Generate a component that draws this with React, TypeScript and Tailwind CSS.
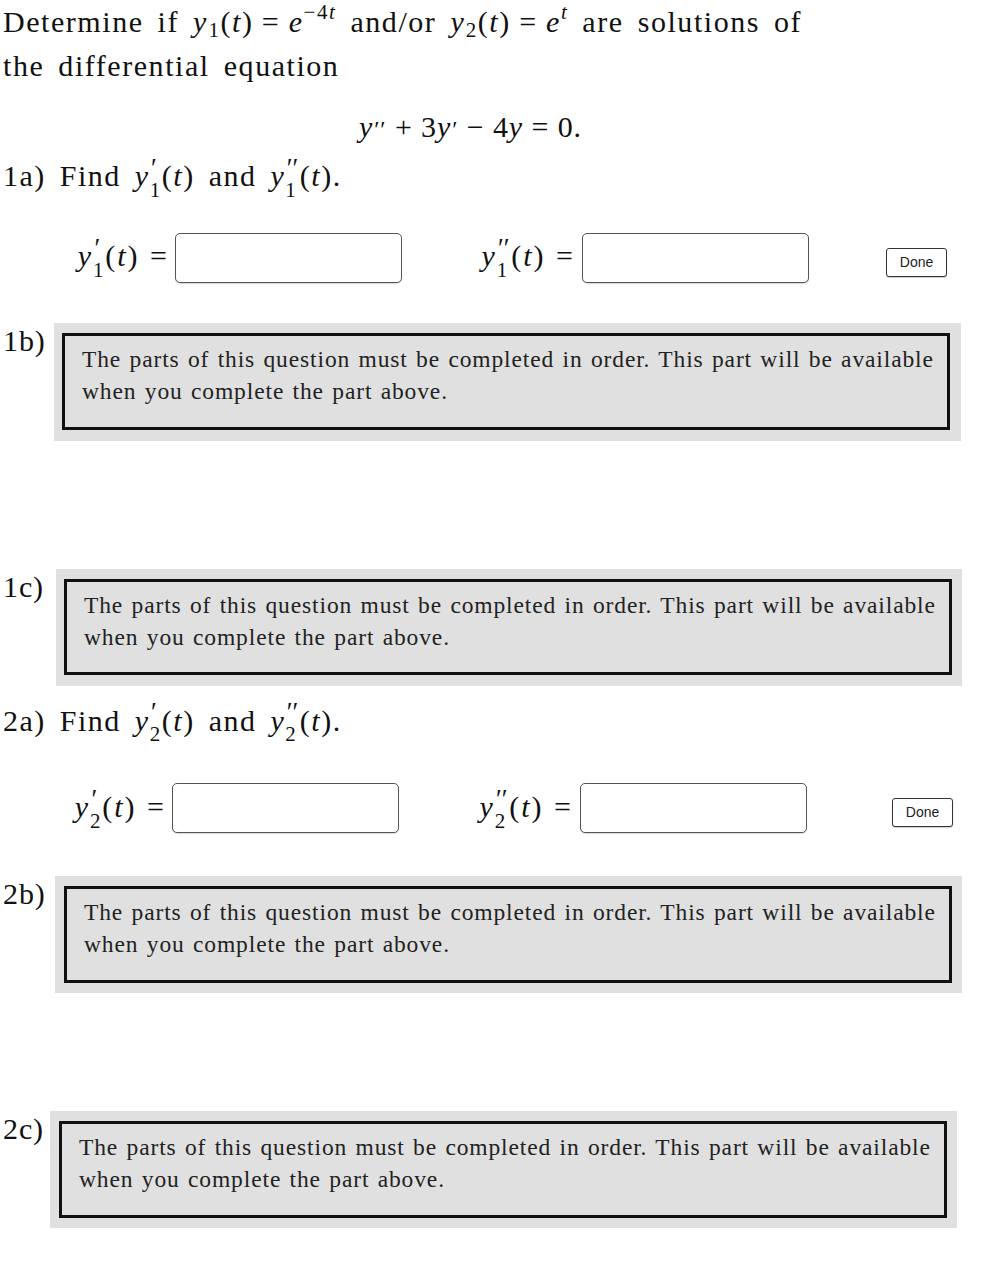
import React from 'react';

const SERIF = { fontFamily: '"Liberation Serif", "Times New Roman", serif' };

function Sym({ children, cls = 'mx-[0.28em]' }: { children: React.ReactNode; cls?: string }) {
  return <span className={cls}>{children}</span>;
}

// y with optional subscript and prime marks
function Yv({ sub, primes }: { sub?: string; primes?: string }) {
  if (primes && sub) {
    return (
      <span className="whitespace-nowrap">
        <i>y</i>
        <span className="inline-flex flex-col items-start align-middle pr-[0.08em] text-[0.7em] leading-none tracking-normal">
          <span className="text-[1.25em] leading-[0.8] pl-[0.05em]">{primes}</span>
          <span className="pt-[0.05em]">{sub}</span>
        </span>
      </span>
    );
  }
  return (
    <span className="whitespace-nowrap">
      <i>y</i>
      {primes && <span className="ml-[0.04em] text-[0.8em] leading-none">{primes}</span>}
      {sub && <span className="inline-block ml-[0.02em] text-[0.7em] leading-none align-[-0.22em]">{sub}</span>}
    </span>
  );
}

function Sup({ children }: { children: React.ReactNode }) {
  return <span className="inline-block text-[0.7em] leading-none align-[0.6em]">{children}</span>;
}

function Locked({ label, labelW, outer, inner }: { label: string; labelW: string; outer: string; inner: string }) {
  return (
    <div className="flex items-start">
      <div className={`${labelW} -mt-[4px] pl-[3px] text-[30px] leading-[44px]`}>{label}</div>
      <div className={`bg-[#e0e0e0] ${outer}`}>
        <div
          className={`border-[3px] border-[#111] ${inner} pl-[17px] pt-[7px] text-[23.5px] leading-[32px] tracking-[0.88px] [word-spacing:1.6px] whitespace-nowrap text-[#222]`}
        >
          The parts of this question must be completed in order. This part will be available
          <br />
          when you complete the part above.
        </div>
      </div>
    </div>
  );
}

function Field() {
  return <div className="h-[50px] w-[227px] rounded-[5px] border border-[#555] bg-white shadow-[0_1px_1px_rgba(0,0,0,0.15)]" />;
}

function DoneBtn({ cls }: { cls: string }) {
  return (
    <button
      className={`${cls} h-[29px] w-[61px] rounded-[3px] border border-[#333] bg-white text-[14px] tracking-normal [word-spacing:0px] text-[#222] shadow-[0_1px_1px_rgba(0,0,0,0.2)]`}
      style={{ fontFamily: '"Liberation Sans", Arial, sans-serif' }}
    >
      Done
    </button>
  );
}

function Deriv({ sub, p }: { sub: string; p: string }) {
  return (
    <span className="whitespace-nowrap">
      <Yv sub={sub} primes={p} />
      <span>(</span>
      <i>t</i>
      <span>)</span>
    </span>
  );
}

function AnswerRow({ sub, w1, w2, doneCls, mt }: { sub: string; w1: string; w2: string; doneCls: string; mt: string }) {
  return (
    <div className={`flex items-center ${mt}`}>
      <div className={`${w1} text-right pr-[6px] text-[30px] leading-[44px] tracking-[2px]`}>
        <Deriv sub={sub} p="′" />
        <Sym cls="ml-[0.35em]">=</Sym>
      </div>
      <Field />
      <div className={`${w2} text-right pr-[7px] text-[30px] leading-[44px] tracking-[2px]`}>
        <Deriv sub={sub} p="′′" />
        <Sym cls="ml-[0.35em]">=</Sym>
      </div>
      <Field />
      <DoneBtn cls={doneCls} />
    </div>
  );
}

export default function App() {
  return (
    <div className="min-h-screen w-[987px] bg-white text-[#111] tracking-[0.9px] [word-spacing:3px]" style={SERIF}>
      <div className="pl-[3px] text-[30px] leading-[44px] tracking-[1.55px] [word-spacing:5px]">
        Determine if <Yv sub="1" />(<i>t</i>)<Sym>=</Sym>
        <i>e</i>
        <Sup>−4<i>t</i></Sup> and/or <Yv sub="2" />(<i>t</i>)<Sym>=</Sym>
        <i>e</i>
        <Sup><i>t</i></Sup> are solutions of
        <br />
        the differential equation
      </div>

      <div className="mt-[17px] pr-[46px] text-center text-[30px] leading-[44px]">
        <Yv primes="′′" /><Sym>+</Sym>3<Yv primes="′" /><Sym>−</Sym>4<i>y</i><Sym>=</Sym>0.
      </div>

      <div className="mt-[5px] pl-[3px] text-[30px] leading-[44px] tracking-[1.5px] [word-spacing:5px]">
        1a) Find <Deriv sub="1" p="′" /> and <Deriv sub="1" p="′′" />.
      </div>

      <AnswerRow sub="1" w1="w-[175px]" w2="w-[180px]" doneCls="ml-[77px] mt-[9px]" mt="mt-[32px]" />

      <div className="mt-[40px]">
        <Locked label="1b)" labelW="w-[54px]" outer="w-[907px] h-[118px] pl-[8px] pt-[10px]" inner="w-[888px] h-[97px]" />
      </div>

      <div className="mt-[128px]">
        <Locked label="1c)" labelW="w-[56px]" outer="w-[906px] h-[117px] pl-[8px] pt-[10px]" inner="w-[888px] h-[96px]" />
      </div>

      <div className="mt-[13px] pl-[3px] text-[30px] leading-[44px] tracking-[1.5px] [word-spacing:5px]">
        2a) Find <Deriv sub="2" p="′" /> and <Deriv sub="2" p="′′" />.
      </div>

      <AnswerRow sub="2" w1="w-[172px]" w2="w-[181px]" doneCls="ml-[85px] mt-[8px]" mt="mt-[38px]" />

      <div className="mt-[43px]">
        <Locked label="2b)" labelW="w-[55px]" outer="w-[907px] h-[117px] pl-[9px] pt-[10px]" inner="w-[888px] h-[97px]" />
      </div>

      <div className="mt-[118px]">
        <Locked label="2c)" labelW="w-[50px]" outer="w-[907px] h-[117px] pl-[9px] pt-[10px]" inner="w-[888px] h-[97px]" />
      </div>
    </div>
  );
}
